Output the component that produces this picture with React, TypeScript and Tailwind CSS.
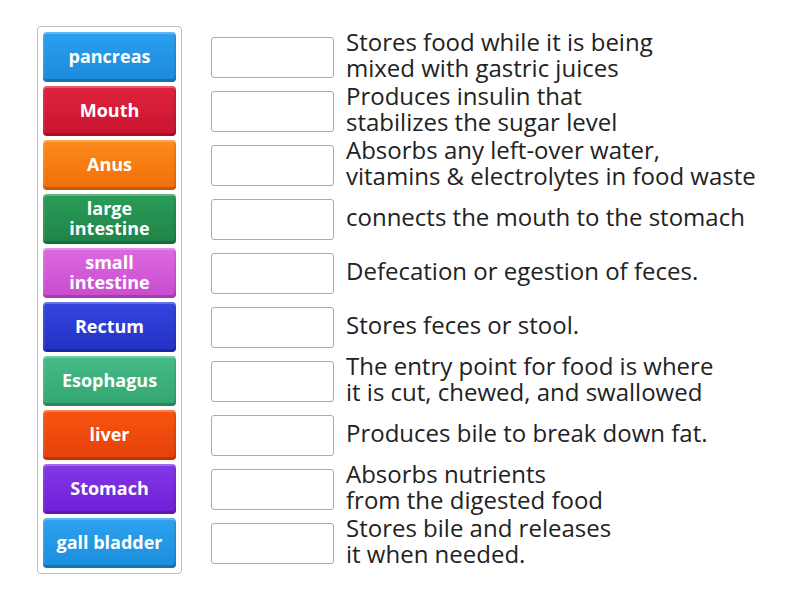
const items = [
  { label: "pancreas", bg: "bg-[linear-gradient(#2c9ff0,#1b8ad9)]" },
  { label: "Mouth", bg: "bg-[linear-gradient(#e0233f,#c8132f)]" },
  { label: "Anus", bg: "bg-[linear-gradient(#fd8a1c,#f06e08)]" },
  { label: "large intestine", bg: "bg-[linear-gradient(#2a9c58,#1f8446)]" },
  { label: "small intestine", bg: "bg-[linear-gradient(#dc6ae0,#c94bcf)]" },
  { label: "Rectum", bg: "bg-[linear-gradient(#3346e0,#2331c4)]" },
  { label: "Esophagus", bg: "bg-[linear-gradient(#45bb86,#34a572)]" },
  { label: "liver", bg: "bg-[linear-gradient(#f8540f,#e4400a)]" },
  { label: "Stomach", bg: "bg-[linear-gradient(#8438e6,#6e1fd6)]" },
  { label: "gall bladder", bg: "bg-[linear-gradient(#2ea2ee,#1a8ddc)]" },
];

const clues = [
  ["Stores food while it is being", "mixed with gastric juices"],
  ["Produces insulin that", "stabilizes the sugar level"],
  ["Absorbs any left-over water,", "vitamins & electrolytes in food waste"],
  ["connects the mouth to the stomach"],
  ["Defecation or egestion of feces."],
  ["Stores feces or stool."],
  ["The entry point for food is where", "it is cut, chewed, and swallowed"],
  ["Produces bile to break down fat."],
  ["Absorbs nutrients", "from the digested food"],
  ["Stores bile and releases", "it when needed."],
];

export default function App() {
  return (
    <div className="w-[800px] h-[600px] bg-white flex items-start pl-[37px] pt-[26px] font-['Open_Sans',sans-serif]">
      <div className="border border-[#bdbdbd] rounded-[4px] p-[5px] flex flex-col gap-[4px]">
        {items.map((it) => (
          <div
            key={it.label}
            className={`w-[133px] h-[50px] rounded-[4px] ${it.bg} shadow-[inset_0_2px_0_rgba(255,255,255,0.25),inset_0_-3px_0_rgba(0,0,0,0.18),inset_2px_0_0_rgba(255,255,255,0.08),inset_-2px_0_0_rgba(0,0,0,0.08)] flex items-center justify-center text-center text-white font-bold text-[18px] leading-[20px] px-1`}
          >
            <span className="max-w-[110px] -mt-[3px]">{it.label}</span>
          </div>
        ))}
      </div>

      <div className="ml-[29px] mt-[6px] flex flex-col gap-[4px]">
        {clues.map((lines, i) => (
          <div key={i} className="h-[50px] flex items-center">
            <div className="w-[123px] h-[41px] border border-[#aaaaaa] rounded-[3px] bg-white" />
            <div className="ml-[12px] -mt-[5px] text-[24px] leading-[26px] text-[#222] whitespace-nowrap">
              {lines.map((l, j) => (
                <div key={j}>{l}</div>
              ))}
            </div>
          </div>
        ))}
      </div>
    </div>
  );
}
